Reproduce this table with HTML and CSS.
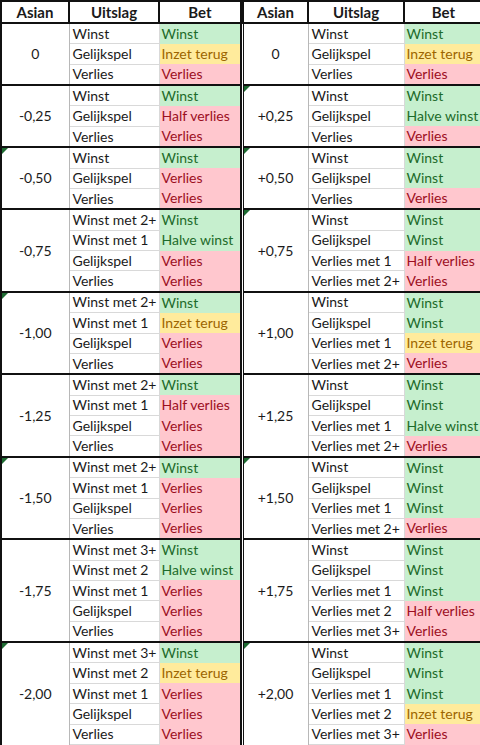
FILE: index.html
```html
<!DOCTYPE html>
<html lang="nl">
<head>
<meta charset="utf-8">
<title>Asian handicap</title>
<link rel="stylesheet" href="styles.css">
</head>
<body>
<div class="sheet">
<table class="t t-left">
  <colgroup><col class="c-asian"><col class="c-uit"><col class="c-bet"></colgroup>
  <thead><tr><th>Asian</th><th>Uitslag</th><th>Bet</th></tr></thead>
  <tbody>
    <tr><td class="asian" rowspan="3">0</td><td class="u">Winst</td><td class="b g">Winst</td></tr>
    <tr><td class="u">Gelijkspel</td><td class="b y">Inzet terug</td></tr>
    <tr><td class="u">Verlies</td><td class="b r">Verlies</td></tr>
  </tbody>
  <tbody>
    <tr><td class="asian" rowspan="3">-0,25</td><td class="u">Winst</td><td class="b g">Winst</td></tr>
    <tr><td class="u">Gelijkspel</td><td class="b r">Half verlies</td></tr>
    <tr><td class="u">Verlies</td><td class="b r">Verlies</td></tr>
  </tbody>
  <tbody>
    <tr><td class="asian" rowspan="3"><span class="flag"></span>-0,50</td><td class="u">Winst</td><td class="b g">Winst</td></tr>
    <tr><td class="u">Gelijkspel</td><td class="b r">Verlies</td></tr>
    <tr><td class="u">Verlies</td><td class="b r">Verlies</td></tr>
  </tbody>
  <tbody>
    <tr><td class="asian" rowspan="4">-0,75</td><td class="u">Winst met 2+</td><td class="b g">Winst</td></tr>
    <tr><td class="u">Winst met 1</td><td class="b g">Halve winst</td></tr>
    <tr><td class="u">Gelijkspel</td><td class="b r">Verlies</td></tr>
    <tr><td class="u">Verlies</td><td class="b r">Verlies</td></tr>
  </tbody>
  <tbody>
    <tr><td class="asian" rowspan="4"><span class="flag"></span>-1,00</td><td class="u">Winst met 2+</td><td class="b g">Winst</td></tr>
    <tr><td class="u">Winst met 1</td><td class="b y">Inzet terug</td></tr>
    <tr><td class="u">Gelijkspel</td><td class="b r">Verlies</td></tr>
    <tr><td class="u">Verlies</td><td class="b r">Verlies</td></tr>
  </tbody>
  <tbody>
    <tr><td class="asian" rowspan="4">-1,25</td><td class="u">Winst met 2+</td><td class="b g">Winst</td></tr>
    <tr><td class="u">Winst met 1</td><td class="b r">Half verlies</td></tr>
    <tr><td class="u">Gelijkspel</td><td class="b r">Verlies</td></tr>
    <tr><td class="u">Verlies</td><td class="b r">Verlies</td></tr>
  </tbody>
  <tbody>
    <tr><td class="asian" rowspan="4"><span class="flag"></span>-1,50</td><td class="u">Winst met 2+</td><td class="b g">Winst</td></tr>
    <tr><td class="u">Winst met 1</td><td class="b r">Verlies</td></tr>
    <tr><td class="u">Gelijkspel</td><td class="b r">Verlies</td></tr>
    <tr><td class="u">Verlies</td><td class="b r">Verlies</td></tr>
  </tbody>
  <tbody>
    <tr><td class="asian" rowspan="5">-1,75</td><td class="u">Winst met 3+</td><td class="b g">Winst</td></tr>
    <tr><td class="u">Winst met 2</td><td class="b g">Halve winst</td></tr>
    <tr><td class="u">Winst met 1</td><td class="b r">Verlies</td></tr>
    <tr><td class="u">Gelijkspel</td><td class="b r">Verlies</td></tr>
    <tr><td class="u">Verlies</td><td class="b r">Verlies</td></tr>
  </tbody>
  <tbody>
    <tr><td class="asian" rowspan="5"><span class="flag"></span>-2,00</td><td class="u">Winst met 3+</td><td class="b g">Winst</td></tr>
    <tr><td class="u">Winst met 2</td><td class="b y">Inzet terug</td></tr>
    <tr><td class="u">Winst met 1</td><td class="b r">Verlies</td></tr>
    <tr><td class="u">Gelijkspel</td><td class="b r">Verlies</td></tr>
    <tr><td class="u">Verlies</td><td class="b r">Verlies</td></tr>
  </tbody>
</table>
<table class="t t-right">
  <colgroup><col class="c-asian"><col class="c-uit"><col class="c-bet"></colgroup>
  <thead><tr><th>Asian</th><th>Uitslag</th><th>Bet</th></tr></thead>
  <tbody>
    <tr><td class="asian" rowspan="3">0</td><td class="u">Winst</td><td class="b g">Winst</td></tr>
    <tr><td class="u">Gelijkspel</td><td class="b y">Inzet terug</td></tr>
    <tr><td class="u">Verlies</td><td class="b r">Verlies</td></tr>
  </tbody>
  <tbody>
    <tr><td class="asian" rowspan="3"><span class="flag"></span>+0,25</td><td class="u">Winst</td><td class="b g">Winst</td></tr>
    <tr><td class="u">Gelijkspel</td><td class="b g">Halve winst</td></tr>
    <tr><td class="u">Verlies</td><td class="b r">Verlies</td></tr>
  </tbody>
  <tbody>
    <tr><td class="asian" rowspan="3"><span class="flag"></span>+0,50</td><td class="u">Winst</td><td class="b g">Winst</td></tr>
    <tr><td class="u">Gelijkspel</td><td class="b g">Winst</td></tr>
    <tr><td class="u">Verlies</td><td class="b r">Verlies</td></tr>
  </tbody>
  <tbody>
    <tr><td class="asian" rowspan="4"><span class="flag"></span>+0,75</td><td class="u">Winst</td><td class="b g">Winst</td></tr>
    <tr><td class="u">Gelijkspel</td><td class="b g">Winst</td></tr>
    <tr><td class="u">Verlies met 1</td><td class="b r">Half verlies</td></tr>
    <tr><td class="u">Verlies met 2+</td><td class="b r">Verlies</td></tr>
  </tbody>
  <tbody>
    <tr><td class="asian" rowspan="4">+1,00</td><td class="u">Winst</td><td class="b g">Winst</td></tr>
    <tr><td class="u">Gelijkspel</td><td class="b g">Winst</td></tr>
    <tr><td class="u">Verlies met 1</td><td class="b y">Inzet terug</td></tr>
    <tr><td class="u">Verlies met 2+</td><td class="b r">Verlies</td></tr>
  </tbody>
  <tbody>
    <tr><td class="asian" rowspan="4">+1,25</td><td class="u">Winst</td><td class="b g">Winst</td></tr>
    <tr><td class="u">Gelijkspel</td><td class="b g">Winst</td></tr>
    <tr><td class="u">Verlies met 1</td><td class="b g">Halve winst</td></tr>
    <tr><td class="u">Verlies met 2+</td><td class="b r">Verlies</td></tr>
  </tbody>
  <tbody>
    <tr><td class="asian" rowspan="4"><span class="flag"></span>+1,50</td><td class="u">Winst</td><td class="b g">Winst</td></tr>
    <tr><td class="u">Gelijkspel</td><td class="b g">Winst</td></tr>
    <tr><td class="u">Verlies met 1</td><td class="b g">Winst</td></tr>
    <tr><td class="u">Verlies met 2+</td><td class="b r">Verlies</td></tr>
  </tbody>
  <tbody>
    <tr><td class="asian" rowspan="5">+1,75</td><td class="u">Winst</td><td class="b g">Winst</td></tr>
    <tr><td class="u">Gelijkspel</td><td class="b g">Winst</td></tr>
    <tr><td class="u">Verlies met 1</td><td class="b g">Winst</td></tr>
    <tr><td class="u">Verlies met 2</td><td class="b r">Half verlies</td></tr>
    <tr><td class="u">Verlies met 3+</td><td class="b r">Verlies</td></tr>
  </tbody>
  <tbody>
    <tr><td class="asian" rowspan="5"><span class="flag"></span>+2,00</td><td class="u">Winst</td><td class="b g">Winst</td></tr>
    <tr><td class="u">Gelijkspel</td><td class="b g">Winst</td></tr>
    <tr><td class="u">Verlies met 1</td><td class="b g">Winst</td></tr>
    <tr><td class="u">Verlies met 2</td><td class="b y">Inzet terug</td></tr>
    <tr><td class="u">Verlies met 3+</td><td class="b r">Verlies</td></tr>
  </tbody>
</table>
</div>
</body>
</html>
```
FILE: styles.css
```css
html, body {
  margin: 0;
  padding: 0;
  background: #fff;
}
body {
  font-family: Lato, "Liberation Sans", sans-serif;
  font-size: 14px;
  color: #1a1a1a;
}
.sheet {
  display: flex;
  width: 480px;
  height: 745px;
  overflow: hidden;
}
.t {
  border-collapse: collapse;
  table-layout: fixed;
  width: 240px;
  flex: none;
}
.t-left .c-asian { width: 68px; }
.t-left .c-uit { width: 90px; }
.t-left .c-bet { width: 82px; }
.t-right .c-asian { width: 65px; }
.t-right .c-uit { width: 96px; }
.t-right .c-bet { width: 79px; }

th {
  height: 20px;
  padding: 0;
  font-weight: 700;
  font-size: 15px;
  text-align: center;
  border: 2px solid #111;
  line-height: 18px;
}
td {
  height: 19.2px;
  padding: 0 0 0 3px;
  white-space: nowrap;
  overflow: hidden;
  line-height: 16px;
}
tbody tr:first-child td {
  border-top: 2px solid #111;
}
.asian {
  position: relative;
  text-align: center;
  padding: 0;
  border-left: 2px solid #111;
  border-right: 1px solid #b8b8b8;
  overflow: visible;
}
.t-right .asian { border-left: 1px solid #111; }
.u {
  border-bottom: 1px solid #d9d9d9;
  border-right: 1px solid #d9d9d9;
}
.b { border-right: 2px solid #111; padding-left: 2px; }
.t-right .b { border-right: none; }
.g { background: #c6efce; color: #1d6b2a; }
.y { background: #ffeb9c; color: #9c6500; }
.r { background: #ffc7ce; color: #9c0f1e; }
.flag {
  position: absolute;
  left: 0;
  top: 0;
  width: 0;
  height: 0;
  border-top: 6px solid #1e6b32;
  border-right: 6px solid transparent;
}
```
